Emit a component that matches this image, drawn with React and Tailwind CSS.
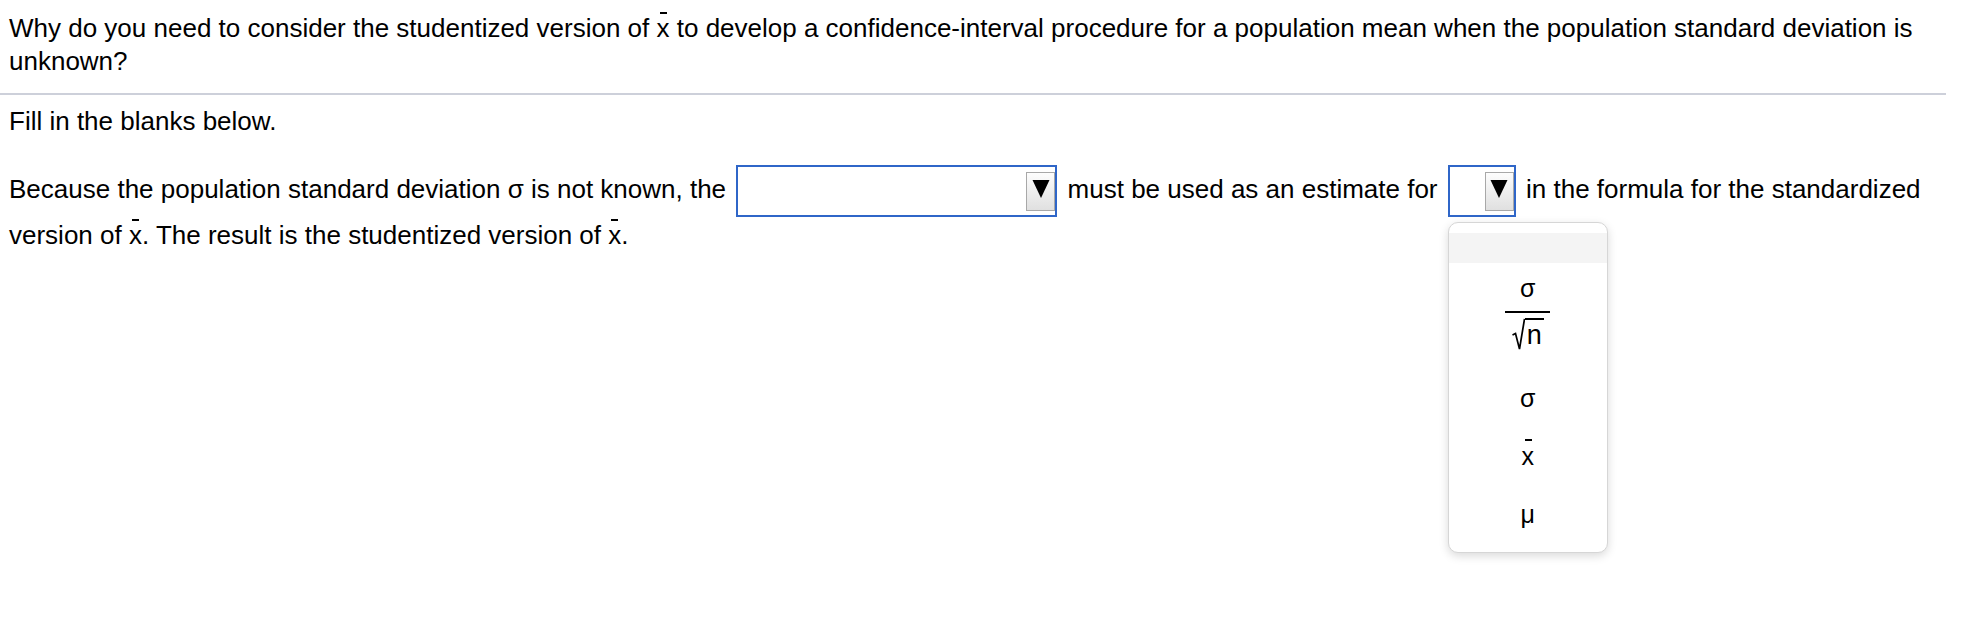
function XBar() {
  return (
    <span className="relative">
      x
      <span className="absolute left-[3px] top-[-1px] h-[2px] w-[7px] bg-black" />
    </span>
  );
}

function DropButton() {
  return (
    <span className="flex h-[39px] w-[29px] justify-center border border-[#a8a8a8] bg-linear-to-b from-[#fdfdfd] to-[#e0e0e0] pt-[7px]">
      <svg width="18" height="18" viewBox="0 0 18 18">
        <polygon points="0.5,0 17.5,0 9,18" fill="#000" />
      </svg>
    </span>
  );
}

function Options() {
  return (
    <div className="absolute left-[-2px] top-[55px] z-10 flex h-[331px] w-[160px] flex-col rounded-[10px] border border-[#d6d6d6] bg-white pt-[10px] text-[25px] leading-[33px] shadow-[0_3px_10px_rgba(0,0,0,0.15)]">
      <div className="h-[30px] bg-[#f4f4f4]" />

      <div className="flex h-[106px] flex-col items-center pt-[11px]">
        <span className="h-[28px] leading-[28px]">σ</span>
        <span className="mt-[9px] h-[2px] w-[45px] bg-black" />
        <span className="mt-[4px] flex h-[34px] items-start">
          <svg width="13" height="33" viewBox="0 0 13 33" className="mt-[1px]">
            <polyline points="0.5,17 3.5,15.5 7.5,31 12.5,1" fill="none" stroke="#000" strokeWidth="1.7" />
          </svg>
          <span className="mt-[1px] border-t-2 border-black px-[2px] text-[27px] leading-[30px]">n</span>
        </span>
      </div>

      <div className="flex h-[58px] items-center justify-center">σ</div>

      <div className="flex h-[58px] items-center justify-center">
        <XBar />
      </div>

      <div className="flex h-[58px] items-center justify-center">μ</div>
    </div>
  );
}

export default function App() {
  return (
    <div className="min-h-[644px] bg-white font-['Liberation_Sans',Arial,sans-serif] text-[26px] leading-[33px] text-black">

      {/* QUESTION */}

      <div className="mr-[18px] border-b-2 border-[#cdd0da] pb-[15px] pl-[9px] pt-[12px]">
        Why do you need to consider the studentized version of <XBar /> to develop a confidence-interval procedure for a population mean when the population standard deviation is unknown?
      </div>

      {/* ANSWER */}

      <div className="pl-[9px] pr-[18px] pt-[10px]">

        <p>Fill in the blanks below.</p>

        <p className="mt-[27px] leading-[37px]">
          Because the population standard deviation σ is not known, the{" "}
          <span className="relative mx-[3px] inline-flex h-[52px] w-[321px] items-center justify-end border-2 border-[#2f66c8] align-middle">
            <DropButton />
          </span>
          {" "}must be used as an estimate for{" "}
          <span className="relative mx-[3px] inline-flex h-[52px] w-[68px] items-center justify-end border-2 border-[#2f66c8] align-middle">
            <DropButton />
            <Options />
          </span>
          {" "}in the formula for the standardized version of <XBar />. The result is the studentized version of <XBar />.
        </p>

      </div>

    </div>
  );
}
